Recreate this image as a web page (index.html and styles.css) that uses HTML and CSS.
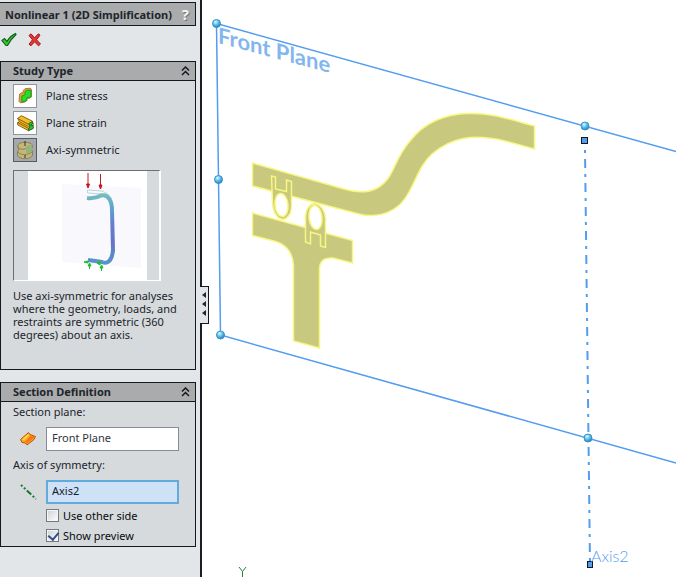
FILE: index.html
```html
<!DOCTYPE html>
<html lang="en">
<head>
<meta charset="utf-8">
<title>Nonlinear 1 (2D Simplification)</title>
<link rel="stylesheet" href="styles.css">
</head>
<body>
<div class="app">
  <aside class="panel">
    <header class="title-bar">
      <h1 class="title">Nonlinear 1 (2D Simplification)</h1>
      <button class="help" type="button" aria-label="Help">?</button>
    </header>
    <div class="actions">
      <button class="action" type="button" aria-label="OK">
        <svg width="18" height="16" viewBox="0 0 18 16"><path d="M2 8.500 L4.500 6.500 L7 9.500 Q10 4 15.500 1.500 L16 2.500 Q10.500 7.500 7.500 13.500 L6 13.500 Z" fill="#35c936" stroke="#13631b" stroke-width="1.200"/></svg>
      </button>
      <button class="action" type="button" aria-label="Cancel">
        <svg width="18" height="16" viewBox="0 0 18 16"><path d="M3 3.500 L5 1.800 L8.500 5.800 L12.500 1.800 L14 3.200 L10.500 7.800 L14.500 12 L12.500 13.800 L8.500 9.800 L5 13.800 L3 12.200 L6.500 7.800 Z" fill="#e43a36" stroke="#a5141a" stroke-width="1"/></svg>
      </button>
    </div>

    <section class="group study">
      <h2 class="group-head"><span>Study Type</span>
        <button class="collapse" type="button" aria-label="Collapse Study Type"><svg width="9" height="10" viewBox="0 0 9 10"><path d="M1 4.500 L4.500 1 L8 4.500 M1 9 L4.500 5.500 L8 9"/></svg></button>
      </h2>
      <div class="group-body">
        <div class="options">
          <label class="option"><input type="radio" name="study">
            <svg class="option-icon" width="24" height="24" viewBox="0 0 24 24"><path d="M6 10 L8 8.500 L10 8.500 V6 L12 4 L18 3.500 L19 5 V13 L17 14.500 H14 V17 L12 18.500 L7 19.500 L5.500 18 Z" fill="#e0a13c" stroke="#a5723a"/><path d="M8.500 12 L12 10.500 V7 L14 6 L18.500 5.500 V13 L14 14 V17 L8.500 18.500 Z" fill="#24df26" stroke="#1a9a20"/></svg>
            <span>Plane stress</span></label>
          <label class="option"><input type="radio" name="study">
            <svg class="option-icon" width="24" height="24" viewBox="0 0 24 24"><path d="M4 7 L8 4 L20 10 L21 13 L20 18 L16 20.500 L4 14 L4 11.500 L6 10.500 Z" fill="#f6bf20" stroke="#765217"/><path d="M4 7 L16 13.500 M6 10.500 L16 16 M4 11.500 L16 18" fill="none" stroke="#815616"/><path d="M16 12.500 L20 10.500 V13 L18 14.500 L21 15 V18 L16 20 V17.500 L17.500 16.500 Z" fill="#27c637" stroke="#17681f"/></svg>
            <span>Plane strain</span></label>
          <label class="option"><input type="radio" name="study" checked>
            <svg class="option-icon" width="24" height="24" viewBox="1 1 22 22"><path d="M4.500 8 C5 3 19 3 19.500 8 L18.500 11 L19.500 14 V17 C18 22 6 22 4.500 17 V14 L6 11.500 Z" fill="#c3b678" stroke="#8a8052"/><path d="M4.500 8 C6 12 12 12 13 10 M5 14 C8 18 15 17 19 14" fill="none" stroke="#8d8355"/><path d="M13 8 L19 6.500 V12 L17 15 H13 Z" fill="#94b47c"/><path d="M12 3 V8 M12 17 V20" stroke="#30352c"/></svg>
            <span>Axi-symmetric</span></label>
        </div>
        <div class="preview">
          <svg class="preview-art" width="119" height="109" viewBox="0 0 119 109" role="img" aria-label="Axi-symmetric section">
            <defs><linearGradient id="tube" x1="0" y1="0" x2="0" y2="1"><stop offset="0" stop-color="#75bcbd"/><stop offset=".15" stop-color="#5fa9cc"/><stop offset=".4" stop-color="#667fd0"/><stop offset=".7" stop-color="#6472c7"/><stop offset="1" stop-color="#5795c9"/></linearGradient></defs>
            <path d="M34 13 L113 17 V97 L34 91 Z" fill="#f8f8fd"/>
            <path d="M59 19 L74 20 Q81 22 84 28 M60 22 L74 23 M59.500 19 V22" fill="none" stroke="#bad5dd"/>
            <path d="M59 27 Q67 28 73 24.500 C81 23 84 31 84 39 L85 79 C84 91 79 93 74 91 L60 89" fill="none" stroke="url(#tube)" stroke-width="4"/>
            <g fill="#c41723" stroke="#c41723"><path d="M60 2 V14 M72.500 3 V15"/><path d="M58.500 13 H61.500 L60 17 Z M71 14 H74 L72.500 18 Z"/></g>
            <g fill="#24cf32" stroke="#17bc28"><path d="M56 91 L60 90 V92 Z M69 92 L72 91 V94 Z M61.500 92 L63 95 H60 Z M73.500 94 L75 97 H72 Z M61.500 95 V98 M73.500 97 V100"/></g>
          </svg>
        </div>
        <p class="description">Use axi-symmetric for analyses where the geometry, loads, and restraints are symmetric (360 degrees) about an axis.</p>
      </div>
    </section>

    <section class="group section-definition">
      <h2 class="group-head"><span>Section Definition</span>
        <button class="collapse" type="button" aria-label="Collapse Section Definition"><svg width="9" height="10" viewBox="0 0 9 10"><path d="M1 4.500 L4.500 1 L8 4.500 M1 9 L4.500 5.500 L8 9"/></svg></button>
      </h2>
      <div class="group-body fields">
        <label class="field-label" for="plane">Section plane:</label>
        <div class="field-row">
          <svg width="18" height="16" viewBox="0 0 18 16"><path d="M1.500 8.500 L9.500 1.500 L11 3.500 L16.500 5.500 L15 8.500 L8 14 L6.500 12 L3 11.500 Z" fill="#f9a51b" stroke="#b95510"/><path d="M6 11 L12 4.500 L16 6 L8.500 12 Z" fill="#ff7412"/><path d="M3 8.500 L9 3 L10 4.500 L5 9.500 Z" fill="#ffd743"/></svg>
          <input id="plane" class="field" type="text" value="Front Plane">
        </div>
        <label class="field-label" for="axis">Axis of symmetry:</label>
        <div class="field-row">
          <svg width="18" height="18" viewBox="0 0 18 18"><path d="M2 2 L17 16" stroke="#16782a" stroke-width="2" stroke-dasharray="2 2 2 2 6 2 2 2"/></svg>
          <input id="axis" class="field active" type="text" value="Axis2">
        </div>
        <div class="checks">
          <label class="check"><input type="checkbox"><span>Use other side</span></label>
          <label class="check"><input type="checkbox" checked><span>Show preview</span></label>
        </div>
      </div>
    </section>
    <button class="splitter" type="button" aria-label="Hide panel"><svg width="4" height="27" viewBox="0 0 4 27"><path d="M4 0 V6 L0 3 Z M4 9 V15 L0 12 Z M4 18 V24 L0 21 Z" fill="#20272d"/></svg></button>
  </aside>

  <main class="viewport">
    <svg class="scene" viewBox="202 0 474 577" preserveAspectRatio="xMinYMin slice">
      <defs><radialGradient id="ball" cx=".38" cy=".3" r=".7"><stop offset="0" stop-color="#e0fbff"/><stop offset=".4" stop-color="#70cef4"/><stop offset="1" stop-color="#267ebc"/></radialGradient></defs>
      <g class="part">
        <path d="M252.500 163 L344 189 C367 196 381 189 389 177 C396 166 398 155 410 141 C424 123 445 114 469 113.500 C492 113 508 119 534.500 126 V149 L505 141 C472 133 451 138 432 154 C420 165 417 178 409 192 C399 212 379 219 359 214 L252.500 186 Z"/>
        <path d="M252.500 213 L352.500 240.500 V263 L333 258 Q319 257 319.500 270 V348 L293.500 341 V265 Q292 244 270 240 L252.500 235.500 Z"/>
        <path d="M271.500 176 L275.500 177 V189 L286.500 191.500 V180 L291.500 181.500 V206 C291 224 274 224 272.500 203 Z"/>
        <ellipse class="hole" cx="281.500" cy="205" rx="6.500" ry="11.500" transform="rotate(-6 281.500 205)"/>
        <path d="M305.500 242 V218 C306 198 324 200 325.500 219 V247.500 L320.500 246 V235 L310.500 232 V244 Z"/>
        <ellipse class="hole" cx="315.500" cy="217.500" rx="6.500" ry="12" transform="rotate(-6 315.500 217.500)"/>
      </g>
      <path class="plane" d="M676 151.500 L216.500 23.500 L220.500 335 L676 463"/>
      <path class="axis" d="M585 150 L590 564"/>
      <g class="handles"><circle cx="216.500" cy="23.500" r="4"/><circle cx="218.500" cy="179.500" r="4"/><circle cx="220.500" cy="335" r="4"/><circle cx="585" cy="126" r="4"/><circle cx="588" cy="438" r="4"/></g>
      <g class="ends"><rect x="581.500" y="137.500" width="6" height="6"/><rect x="587.500" y="561.500" width="5" height="6"/></g>
      <text class="plane-name" transform="translate(218 43) skewY(15)">Front Plane</text>
      <text class="axis-name" x="591" y="562">Axis2</text>
      <path class="triad" d="M239 567 L242.500 571.500 L246 567 M242.500 571.500 V577"/>
    </svg>
  </main>
</div>
</body>
</html>
```
FILE: styles.css
```css
* { box-sizing: border-box; }
body { margin: 0; background: #fff; }
body, button, input { font-family: "Noto Sans", "Open Sans", sans-serif; font-size: 11px; line-height: 13px; color: #20242a; }
button { padding: 0; border: 0; background: none; }
svg { display: block; flex: none; }
.app { display: flex; min-height: 100vh; }
.panel { position: relative; flex: none; width: 202px; padding: 2px 4px 0 0; border-right: 2px solid #1a1d21; background: #e2e6e9; }
.title-bar { display: flex; align-items: center; justify-content: space-between; height: 24px; padding: 0 6px 0 5px; border: 1px solid #15181d; border-left: 0; background: #a9abad; }
.title, .group-head { margin: 0; font-size: 11px; line-height: 13px; font-weight: 700; white-space: nowrap; }
.help { color: #f4f4f4; font-size: 15px; font-weight: 700; text-shadow: 1px 1px #777; }
.actions { display: flex; gap: 8px; height: 35px; align-items: flex-start; padding-top: 6px; }
.group { margin-bottom: 12px; border: 1px solid #15181d; background: #d6dadd; }
.group-head { display: flex; align-items: center; justify-content: space-between; height: 19px; padding: 0 5px 2px 12px; border-bottom: 1px solid #15181d; background: #a9abad; }
.collapse { padding-top: 1px; }
.collapse path { fill: none; stroke: #15191e; stroke-width: 1.500; }
.group-body { padding: 3px 12px; }
.study .group-body { padding-bottom: 28px; }
.options { display: grid; gap: 3px; }
.option { display: flex; align-items: center; gap: 9px; height: 24px; }
.option span { padding-bottom: 2px; }
.option input { position: absolute; opacity: 0; margin: 0; }
.option-icon { border: 1px solid #91969c; background: #fff; }
.option input:checked + .option-icon { background: #a5a9ad; border-color: #565b60; }
.preview { width: 148px; margin-top: 8px; padding-left: 14px; border: 1px solid #6c7073; border-right: 2px solid #fff; border-bottom-color: #fff; }
.preview-art { background: #fff; }
.description { width: 170px; margin: 8px 0 0; }
.section-definition { margin-bottom: 0; }
.section-definition .group-body { padding: 2px 12px 4px; }
.field-label { display: block; height: 15px; margin-top: 1px; }
.field-row { display: flex; align-items: center; gap: 9px; padding-left: 6px; margin: 7px 0; }
.field { width: 133px; height: 24px; padding: 0 5px 4px; border: 1px solid #858d99; background: #fff; color: #34343e; outline: 0; }
.active { border: 2px solid #62aade; padding: 0 4px 4px; background: #cde2f7; color: #14202c; }
.checks { display: grid; gap: 7px; margin: -2px 0 0 33px; }
.check { display: flex; align-items: center; gap: 4px; height: 13px; color: #090b0e; }
.check input { width: 13px; height: 13px; margin: 0; appearance: none; border: 1px solid #747980; background: linear-gradient(135deg, #ccd0d5, #fff); box-shadow: inset 0 0 0 1px #f5f6f7; }
.check input:checked::before { content: ""; display: block; width: 5px; height: 8px; margin: 0 0 0 3px; border: solid #354b86; border-width: 0 2px 2px 0; transform: rotate(40deg); }
.splitter { position: absolute; top: 286px; right: -9px; display: grid; place-items: center; width: 9px; height: 38px; border: 1px solid #15181d; border-left: 0; background: #e2e6e9; }
.viewport { position: relative; flex: 1; min-width: 0; overflow: hidden; }
.scene { width: 100%; height: 100vh; }
.part path { fill: #c9c87f; stroke: #f7f782; stroke-width: 1.500; }
.part .hole { fill: #fff; stroke: #f7f782; stroke-width: 1.500; }
.plane { fill: none; stroke: #539cf0; stroke-width: 1.500; }
.axis { stroke: #539cf0; stroke-width: 2; stroke-dasharray: 3 6 9 6; }
.handles circle { fill: url(#ball); stroke: #3a93c9; stroke-width: 1; }
.ends rect { fill: #539cf0; stroke: #101820; stroke-width: 1; }
.plane-name { font: 700 22px Lato, sans-serif; fill: #83b6ee; }
.axis-name { font: 300 16px Lato, sans-serif; fill: #539cf0; }
.triad { fill: none; stroke: #248342; stroke-width: 1; }
```
